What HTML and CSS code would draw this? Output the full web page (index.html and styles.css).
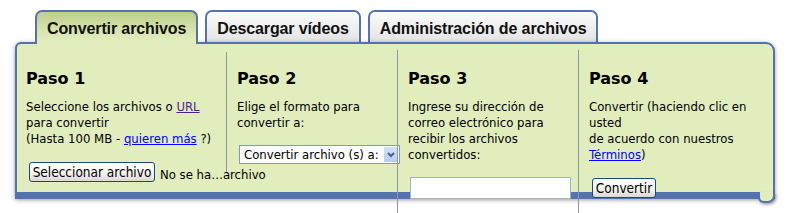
FILE: index.html
```html
<!DOCTYPE html>
<html lang="es">
<head>
    <meta charset="UTF-8">
    <title>Convertir archivos</title>
    <link rel="stylesheet" href="styles.css">
</head>
<body>

<div class="converter">
    <ul class="tabs">
        <li class="tab active">Convertir archivos</li>
        <li class="tab">Descargar vídeos</li>
        <li class="tab">Administración de archivos</li>
    </ul>

    <div class="panel">
        <div class="step step-1">
            <h2>Paso 1</h2>
            <p>Seleccione los archivos o <a href="#" class="visited">URL</a><br>
            para convertir<br>
            (Hasta 100 MB - <a href="#">quieren más</a> ?)</p>
            <div class="file-row">
                <button class="xp-button file-button">Seleccionar archivo</button>
                <span class="file-name">No se ha…archivo</span>
            </div>
        </div>

        <div class="step step-2">
            <h2>Paso 2</h2>
            <p>Elige el formato para<br>convertir a:</p>
            <div class="select-box">
                <select class="format-select">
                    <option>Convertir archivo (s) a:</option>
                </select>
                <span class="select-arrow">
                    <svg width="14" height="15" viewBox="0 0 14 15">
                        <path d="M4 6 L7 9 L10 6" fill="none" stroke="#4d6185" stroke-width="2"/>
                    </svg>
                </span>
            </div>
        </div>

        <div class="step step-3">
            <h2>Paso 3</h2>
            <p>Ingrese su dirección de<br>
            correo electrónico para<br>
            recibir los archivos<br>
            convertidos:</p>
            <input type="text" class="email-input">
        </div>

        <div class="step step-4">
            <h2>Paso 4</h2>
            <p>Convertir (haciendo clic en<br>
            usted<br>
            de acuerdo con nuestros<br>
            <a href="#">Términos</a>)</p>
            <button class="xp-button convert-button">Convertir</button>
        </div>

        <div class="curl"></div>
    </div>
</div>

</body>
</html>
```

FILE: styles.css
```css
html, body {
    min-height: 213px;
}
body {
    margin: 0;
    background-color: #fff;
    font-family: "DejaVu Sans Condensed", "DejaVu Sans", sans-serif;
    font-stretch: condensed;
    font-size: 13px;
    color: #000;
}
.converter {
    padding: 10px 0 14px 15px;
    width: 760px;
}
.tabs {
    display: flex;
    align-items: flex-end;
    gap: 7px;
    list-style: none;
    margin: 0 0 0 20px;
    padding: 0;
}
.tab {
    box-sizing: border-box;
    height: 32px;
    padding: 3px 10px 0;
    line-height: 27px;
    border: 2px solid #5473ae;
    border-bottom: none;
    border-radius: 7px 7px 0 0;
    background: linear-gradient(#fbfbfb, #e3e3e3);
    font-family: "Liberation Sans", Arial, sans-serif;
    font-stretch: normal;
    font-size: 16px;
    font-weight: bold;
    letter-spacing: -0.12px;
    color: #111;
}
.tab.active {
    position: relative;
    z-index: 2;
    height: 34px;
    margin-bottom: -2px;
    padding-bottom: 2px;
    background: linear-gradient(#bccd8c, #d6e4ac 55%, #e1edbd 90%);
}
.panel {
    position: relative;
    display: flex;
    align-items: flex-start;
    height: 142px;
    padding-top: 6px;
    border: 2px solid #5473ae;
    border-bottom-width: 7px;
    border-radius: 6px 9px 0 0;
    background-color: #e1edbd;
    box-shadow: 0 1px 4px rgba(0, 0, 0, 0.4);
}
.step {
    position: relative;
    box-sizing: border-box;
    padding: 19px 0 0 10px;
}
.step-1 {
    width: 209px;
    padding-left: 9px;
}
.step-2 {
    width: 171px;
    height: 120px;
    margin-top: 2px;
    padding-top: 17px;
    border-left: 1px solid #8e98a4;
}
.step-3 {
    width: 181px;
    height: 163px;
    border-left: 1px solid #8e98a4;
}
.step-4 {
    width: 195px;
    height: 163px;
    border-left: 1px solid #8e98a4;
}
h2 {
    margin: 0;
    font-family: "DejaVu Sans", Verdana, sans-serif;
    font-stretch: normal;
    font-size: 16px;
    line-height: 20px;
    font-weight: bold;
}
p {
    margin: 10px 0 0;
    line-height: 16px;
    white-space: nowrap;
}
a {
    color: #0000ff;
}
a.visited {
    color: #551a8b;
}
.xp-button {
    box-sizing: border-box;
    flex-shrink: 0;
    height: 20px;
    padding: 0;
    border: 1px solid #1c4a80;
    border-radius: 3px;
    background: linear-gradient(#ffffff, #f3f2ee 60%, #dcd8cc);
    font-family: "DejaVu Sans Condensed", "DejaVu Sans", sans-serif;
    font-stretch: condensed;
    font-size: 13.5px;
    color: #000;
}
.file-row {
    display: flex;
    align-items: flex-start;
    margin: 15px 0 0 3px;
    white-space: nowrap;
}
.file-button {
    width: 126px;
}
.file-name {
    flex-shrink: 0;
    margin-left: 5px;
    padding-top: 5px;
    line-height: 16px;
}
.select-box {
    position: relative;
    width: 161px;
    height: 19px;
    margin: 14px 0 0 2px;
}
.format-select {
    appearance: none;
    box-sizing: border-box;
    width: 161px;
    height: 19px;
    margin: 0;
    padding: 0 0 0 4px;
    border: 1px solid #7f9db9;
    border-radius: 0;
    background-color: #fff;
    font-family: "DejaVu Sans Condensed", "DejaVu Sans", sans-serif;
    font-stretch: condensed;
    font-size: 13px;
    color: #000;
}
.select-arrow {
    position: absolute;
    top: 2px;
    right: 2px;
    width: 14px;
    height: 15px;
    border-radius: 1px;
    background: linear-gradient(#d3e0fc, #b7cbf4);
}
.select-arrow svg {
    display: block;
}
.email-input {
    box-sizing: border-box;
    width: 161px;
    height: 22px;
    margin: 14px 0 0 2px;
    border: 1px solid #a5b4c4;
    background-color: #fff;
}
.convert-button {
    display: block;
    width: 64px;
    margin: 15px 0 0 3px;
}
.curl {
    position: absolute;
    right: -2px;
    bottom: -11px;
    box-sizing: border-box;
    width: 17px;
    height: 11px;
    border: 2px solid #5473ae;
    border-top: none;
    border-radius: 0 0 7px 6px;
    background-color: #e1edbd;
    box-shadow: 1px 2px 3px rgba(0, 0, 0, 0.3);
}
```
